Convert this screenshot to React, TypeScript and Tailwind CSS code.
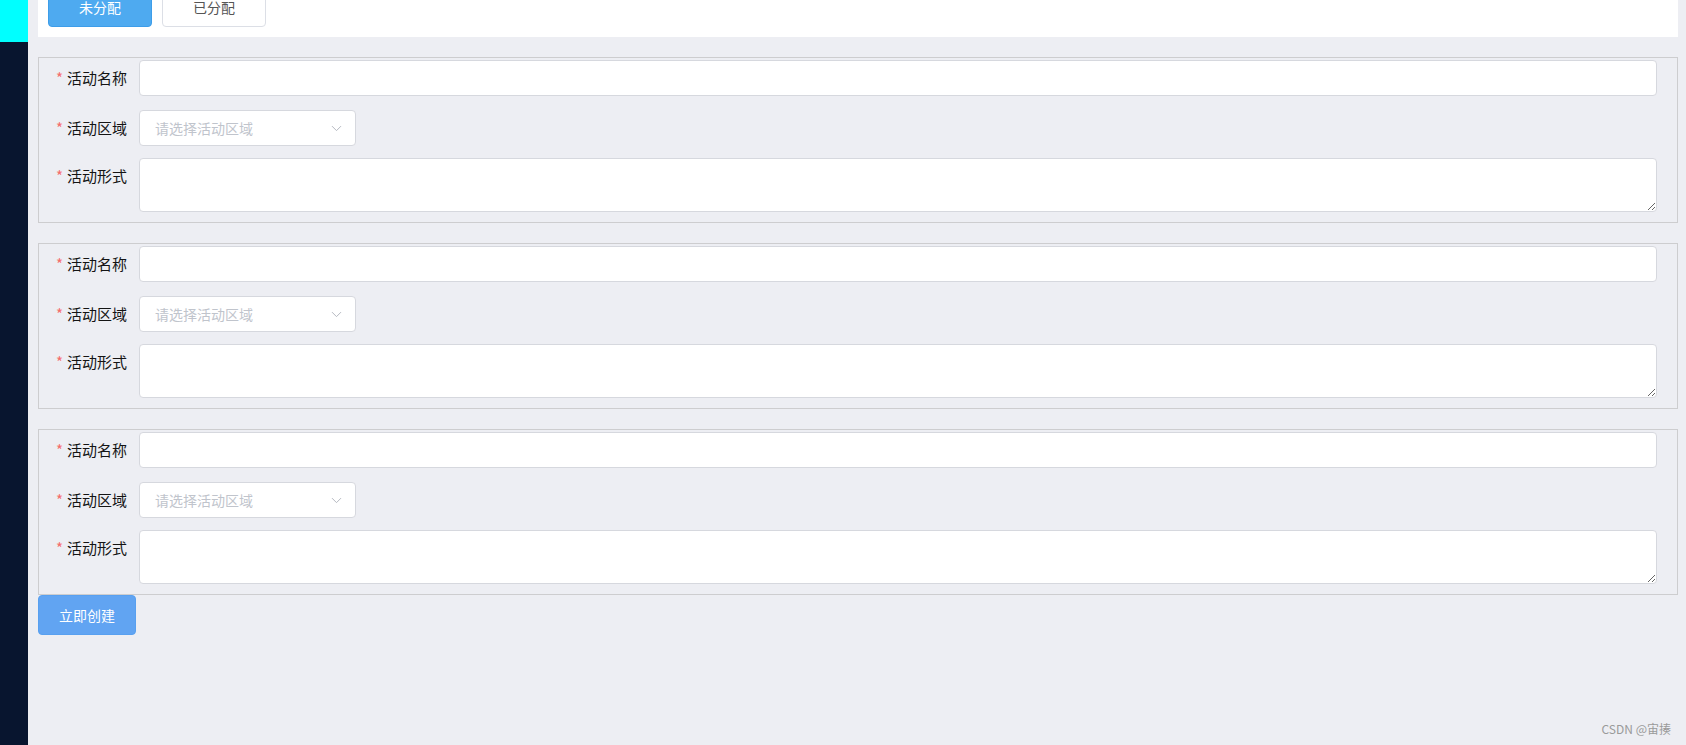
import { ChevronDown } from 'lucide-react'

const FONT = "font-['Microsoft_YaHei','Noto_Sans_CJK_SC','Noto_Sans',sans-serif]"

function Label({ text }: { text: string }) {
  return (
    <div className="w-[100px] shrink-0 h-[36px] leading-[36px] pr-[12px] text-right text-[15px] text-[#141414]">
      <span className="text-[#f56c6c] mr-[4px]">*</span>
      {text}
    </div>
  )
}

function ActivityBlock() {
  return (
    <div className="border border-[#cdcdcf] pt-[2px] pb-[10px] pr-[20px]">
      {/* 活动名称 */}
      <div className="flex">
        <Label text="活动名称" />
        <input
          type="text"
          className="flex-1 h-[36px] rounded-[4px] border border-[#d6d8de] bg-white px-[15px] text-[14px] outline-none"
        />
      </div>

      {/* 活动区域 */}
      <div className="flex mt-[14px]">
        <Label text="活动区域" />
        <div className="w-[217px] h-[36px] rounded-[4px] border border-[#d6d8de] bg-white flex items-center justify-between pl-[15px] pr-[10px]">
          <span className="text-[14px] text-[#c0c4cc]">请选择活动区域</span>
          <ChevronDown size={17} strokeWidth={1.4} className="text-[#b4b8c0]" />
        </div>
      </div>

      {/* 活动形式 */}
      <div className="flex mt-[12px]">
        <Label text="活动形式" />
        <textarea className="flex-1 h-[54px] rounded-[4px] border border-[#d6d8de] bg-white px-[15px] py-[5px] text-[14px] outline-none" />
      </div>
    </div>
  )
}

export default function App() {
  return (
    <div className={`flex h-screen w-full overflow-hidden ${FONT}`}>
      {/* Sidebar */}
      <div className="w-[28px] shrink-0 flex flex-col">
        <div className="h-[42px] bg-[#00ffff]" />
        <div className="flex-1 bg-[#08152f]" />
      </div>

      {/* Main */}
      <div className="relative flex-1 bg-[#edeef3] pl-[10px] pr-[8px]">
        {/* Tabs bar (scrolled partly out of view) */}
        <div className="-mt-[23px] bg-white pt-[10px] pb-[10px] pl-[10px] flex gap-[10px]">
          <button className="w-[104px] h-[40px] rounded-[4px] bg-[#4eaaf0] border border-[#3d9de9] text-white text-[14px]">
            未分配
          </button>
          <button className="w-[104px] h-[40px] rounded-[4px] bg-white border border-[#dcdfe6] text-[#555] text-[14px]">
            已分配
          </button>
        </div>

        <div className="mt-[20px] flex flex-col gap-[20px]">
          <ActivityBlock />
          <ActivityBlock />
          <div>
            <ActivityBlock />
            <button className="w-[98px] h-[40px] rounded-[4px] bg-[#61a4f2] border border-[#58a0f0] text-white text-[14px]">
              立即创建
            </button>
          </div>
        </div>

        {/* Watermark */}
        <div className="absolute right-[15px] bottom-[7px] text-[12px] text-[#9a9a9a]">
          CSDN @宙揍
        </div>
      </div>
    </div>
  )
}
